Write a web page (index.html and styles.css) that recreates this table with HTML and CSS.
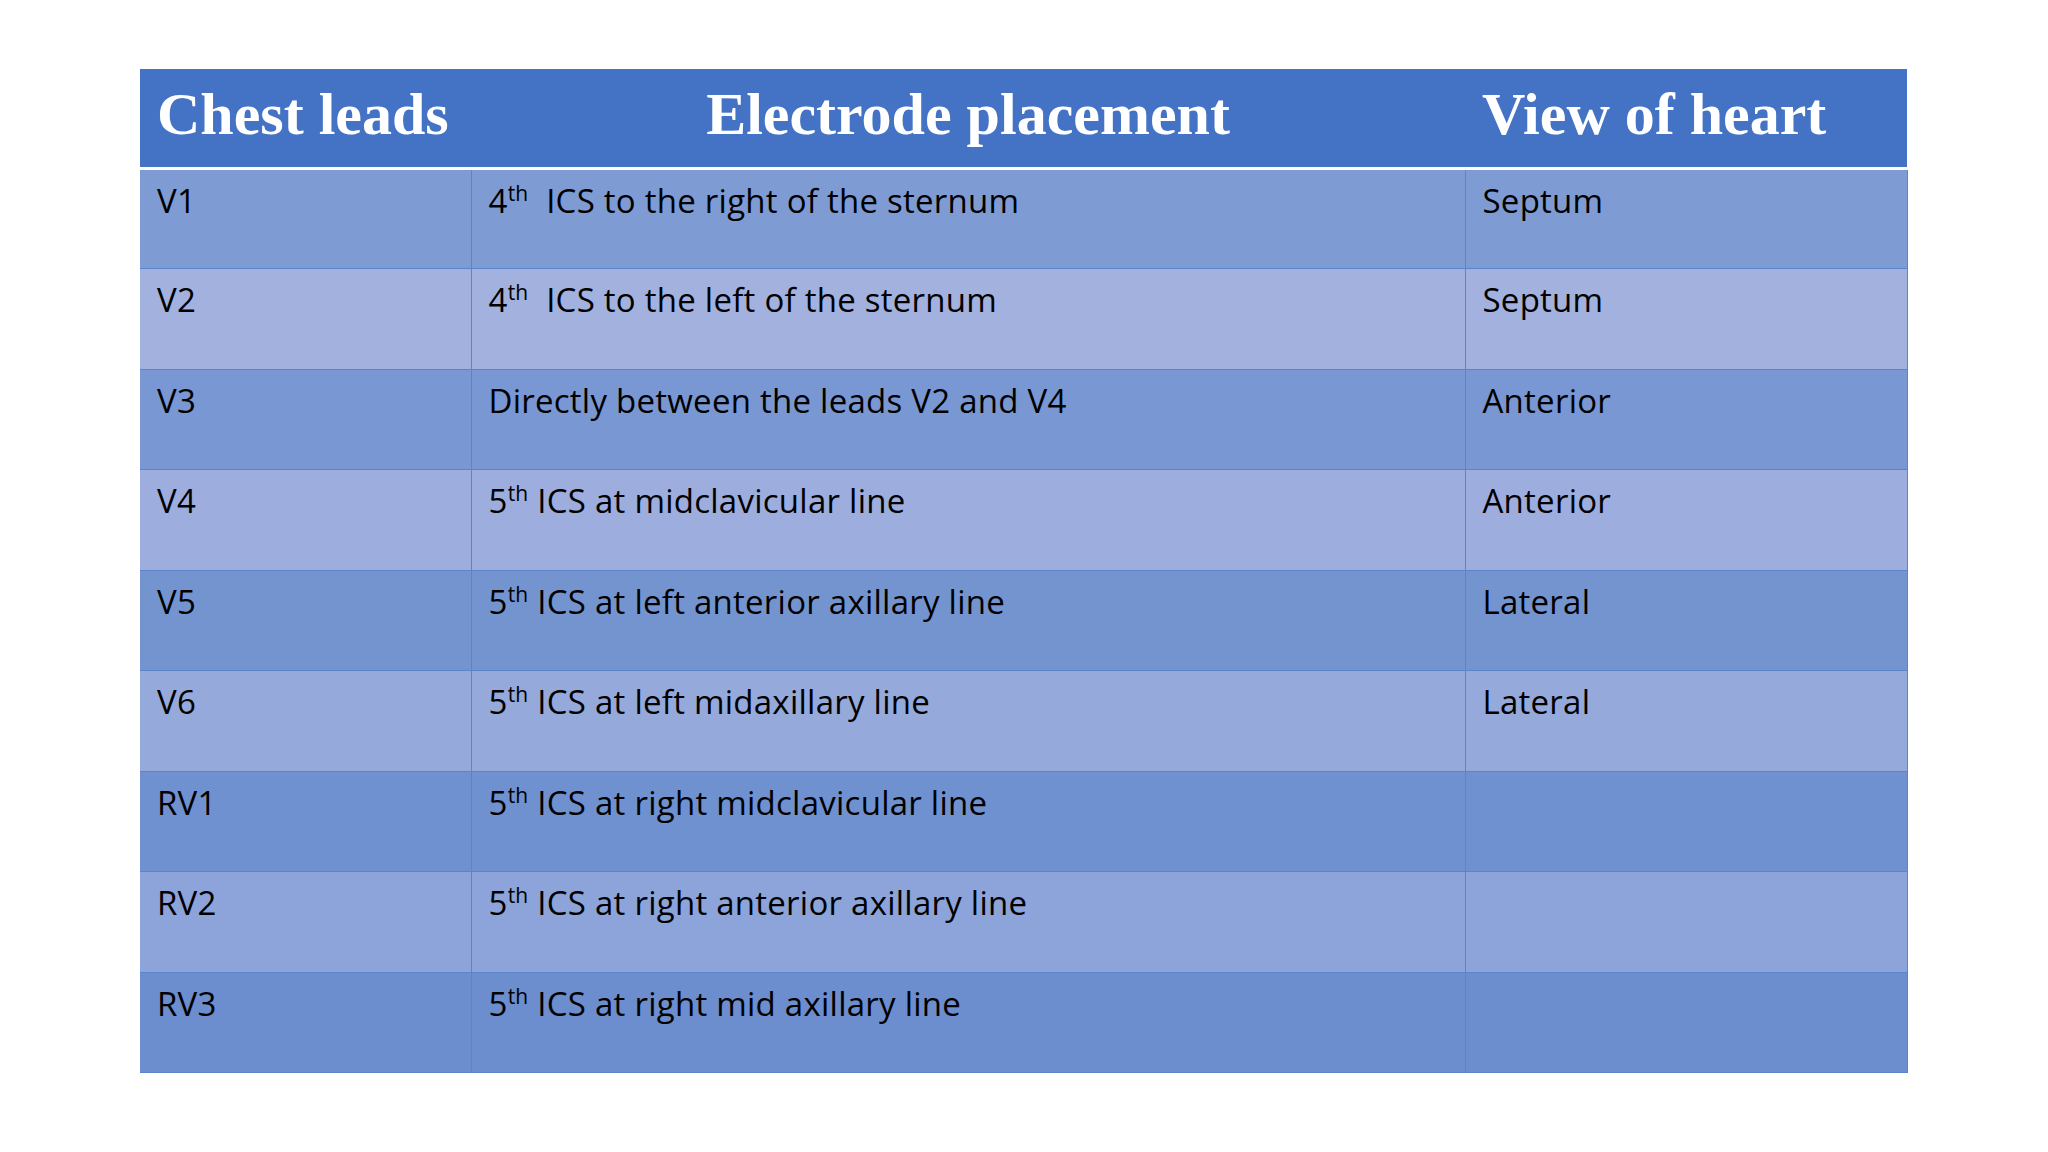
FILE: index.html
```html
<!DOCTYPE html>
<html lang="en">
<head>
<meta charset="utf-8">
<title>Chest leads</title>
<link rel="stylesheet" href="styles.css">
</head>
<body>
<main class="slide">
  <table class="leads">
    <colgroup>
      <col class="c1">
      <col class="c2">
      <col class="c3">
    </colgroup>
    <thead>
      <tr>
        <th class="h-left">Chest leads</th>
        <th class="h-center">Electrode placement</th>
        <th class="h-left">View of heart</th>
      </tr>
    </thead>
    <tbody>
      <tr class="r1"><td>V1</td><td>4<sup>th</sup>&nbsp; ICS to the right of the sternum</td><td>Septum</td></tr>
      <tr class="r2"><td>V2</td><td>4<sup>th</sup>&nbsp; ICS to the left of the sternum</td><td>Septum</td></tr>
      <tr class="r3"><td>V3</td><td>Directly between the leads V2 and V4</td><td>Anterior</td></tr>
      <tr class="r4"><td>V4</td><td>5<sup>th</sup> ICS at midclavicular line</td><td>Anterior</td></tr>
      <tr class="r5"><td>V5</td><td>5<sup>th</sup> ICS at left anterior axillary line</td><td>Lateral</td></tr>
      <tr class="r6"><td>V6</td><td>5<sup>th</sup> ICS at left midaxillary line</td><td>Lateral</td></tr>
      <tr class="r7"><td>RV1</td><td>5<sup>th</sup> ICS at right midclavicular line</td><td></td></tr>
      <tr class="r8"><td>RV2</td><td>5<sup>th</sup> ICS at right anterior axillary line</td><td></td></tr>
      <tr class="r9"><td>RV3</td><td>5<sup>th</sup> ICS at right mid axillary line</td><td></td></tr>
    </tbody>
  </table>
</main>
</body>
</html>
```
FILE: styles.css
```css
html, body {
  margin: 0;
  padding: 0;
  background: #ffffff;
}

.slide {
  width: 2048px;
  height: 1152px;
  box-sizing: border-box;
  padding: 69px 0 0 140px;
}

.leads {
  border-collapse: collapse;
  table-layout: fixed;
  width: 1767px;
}

.c1 { width: 331px; }
.c2 { width: 994px; }
.c3 { width: 442px; }

.leads th {
  background: #4472c4;
  color: #ffffff;
  font-family: "Liberation Serif", "Times New Roman", serif;
  font-weight: bold;
  font-size: 60px;
  line-height: 60px;
  height: 99px;
  box-sizing: border-box;
  padding: 0 17px 8px 17px;
  vertical-align: middle;
  border-bottom: 3px solid #ffffff;
}

.h-left { text-align: left; }
.h-center { text-align: center; }

.leads td {
  height: 100px;
  box-sizing: border-box;
  padding: 9px 17px 0 17px;
  vertical-align: top;
  font-family: "Open Sans", "Noto Sans", sans-serif;
  font-size: 33px;
  letter-spacing: 0.25px;
  line-height: 44px;
  color: #000000;
  border: 1px solid #5b84cc;
  white-space: nowrap;
}

.leads .r2 td,
.leads .r4 td,
.leads .r6 td,
.leads .r8 td {
  height: 101px;
}

.leads tr td:first-child { border-left: none; }

.leads sup {
  font-size: 21px;
  line-height: 0;
  vertical-align: 12px;
}

.r1 td { background: #7e9bd4; }
.r2 td { background: #a2b1de; }
.r3 td { background: #7997d2; }
.r4 td { background: #9dadde; }
.r5 td { background: #7494d0; }
.r6 td { background: #95a9db; }
.r7 td { background: #7091d0; }
.r8 td { background: #8ca4d9; }
.r9 td { background: #6c8dce; }
```
